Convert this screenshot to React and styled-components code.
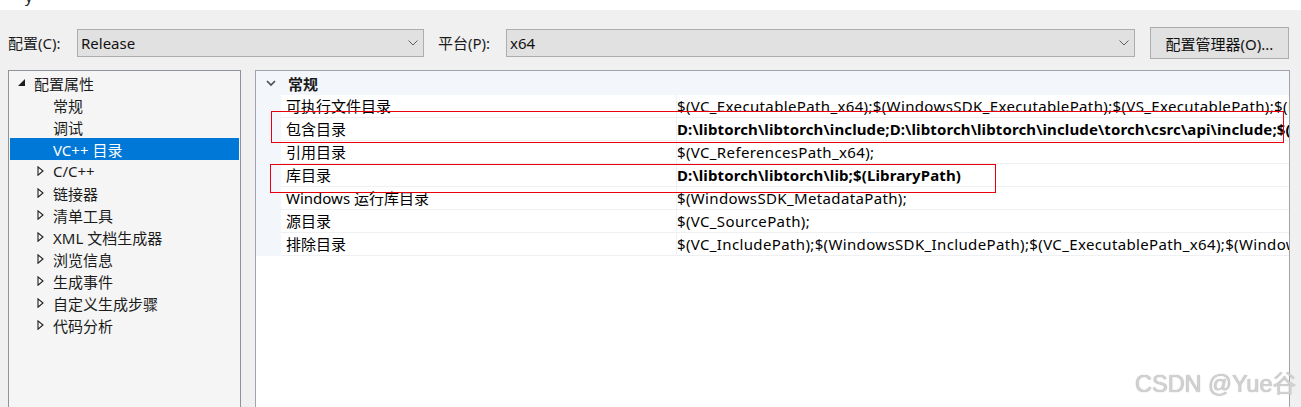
import React from 'react';
import styled, { createGlobalStyle } from 'styled-components';

const GlobalStyle = createGlobalStyle`
  html, body {
    margin: 0;
    padding: 0;
    background: #f0f0f0;
    overflow: hidden;
  }
  body {
    font-family: 'Noto Sans', 'Noto Sans CJK SC', sans-serif;
    font-size: 15px;
    color: #1b1b1b;
  }
`;

const Page = styled.div`
  position: relative;
  height: 407px;
  overflow: hidden;
`;

const TitleStrip = styled.div`
  height: 10px;
  background: #fff;
  overflow: hidden;
  padding-left: 25px;
`;

const TitleText = styled.span`
  display: block;
  line-height: 14px;
  font-size: 15px;
  margin-top: -11px;
  color: #222;
`;

const Toolbar = styled.div`
  height: 60px;
  box-sizing: border-box;
  display: flex;
  align-items: flex-start;
  padding: 17px 12px 0 8px;
`;

const Label = styled.label`
  width: ${({ $w }) => $w}px;
  margin-left: ${({ $ml }) => $ml || 0}px;
  margin-top: 2px;
  line-height: 28px;
  white-space: nowrap;
`;

const Combo = styled.div`
  width: ${({ $w }) => $w}px;
  height: 28px;
  margin-top: 2px;
  box-sizing: border-box;
  border: 1px solid #adadad;
  background: #e1e1e1;
  display: flex;
  align-items: center;
  justify-content: space-between;
  padding: 0 5px 0 3px;
  color: #111;
`;

const Button = styled.button`
  margin-left: 15px;
  width: 139px;
  height: 32px;
  border: 1px solid #adadad;
  background: #e1e1e1;
  font: inherit;
  color: #111;
  padding: 0;
`;

const Main = styled.div`
  display: flex;
  gap: 14px;
  padding: 0 11px 0 8px;
  height: 337px;
`;

const TreePanel = styled.div`
  width: 233px;
  flex: none;
  box-sizing: border-box;
  border: 1px solid #8e9299;
  border-bottom: none;
  background: #f5f5f5;
  padding: 1px;
`;

const TreeRow = styled.div`
  height: 22px;
  display: flex;
  align-items: center;
  padding-left: ${({ $level }) => ($level ? 27 : 8)}px;
  background: ${({ $selected }) => ($selected ? '#0078d7' : 'transparent')};
  color: ${({ $selected }) => ($selected ? '#fff' : '#1b1b1b')};
  white-space: nowrap;
`;

const Twisty = styled.span`
  width: 16px;
  flex: none;
  display: flex;
  align-items: center;
`;

const GridPanel = styled.div`
  flex: 1;
  box-sizing: border-box;
  border: 1px solid #a0a3a9;
  border-bottom: none;
  background: #fff;
  overflow: hidden;
`;

const CategoryRow = styled.div`
  height: 24px;
  display: flex;
  align-items: center;
  background: #f3f6fa;
  font-weight: 700;
`;

const Chevron = styled.span`
  width: 30px;
  flex: none;
  display: flex;
  justify-content: center;
  padding-right: 2px;
`;

const PropRow = styled.div`
  display: grid;
  grid-template-columns: 25px 395px 1fr;
  height: 23px;
`;

const Gutter = styled.div`
  background: #f3f6fa;
`;

const Cell = styled.div`
  box-sizing: border-box;
  border-bottom: 1px solid #eef0f3;
  border-left: ${({ $value }) => ($value ? '1px solid #eef0f3' : 'none')};
  padding-left: ${({ $value }) => ($value ? 0 : 5)}px;
  line-height: 22px;
  white-space: nowrap;
  overflow: hidden;
  font-weight: ${({ $bold }) => ($bold ? 700 : 400)};
  letter-spacing: ${({ $value, $bold }) => ($value ? ($bold ? '0.12px' : '0.36px') : '0')};
  color: #000;
`;

const RedBox = styled.div`
  position: absolute;
  left: ${({ $x }) => $x}px;
  top: ${({ $y }) => $y}px;
  width: ${({ $w }) => $w}px;
  height: ${({ $h }) => $h}px;
  box-sizing: border-box;
  border: 1px solid #e8000b;
  pointer-events: none;
`;

const Watermark = styled.div`
  position: absolute;
  left: 1135px;
  top: 369px;
  font-family: 'Liberation Sans', 'Noto Sans CJK SC', sans-serif;
  font-size: 23.5px;
  line-height: 30px;
  color: #d2d2d2;
  text-shadow: 0 0 1px #9a9a9a;
  white-space: nowrap;
`;

const DropArrow = () => (
  <svg width="10" height="6" viewBox="0 0 10 6">
    <path d="M0.5 0.5 L5 5 L9.5 0.5" fill="none" stroke="#606060" strokeWidth="1" />
  </svg>
);

const Expanded = () => (
  <svg width="8" height="8" viewBox="0 0 8 8">
    <path d="M7 0 L7 7 L0 7 Z" fill="#1e1e1e" />
  </svg>
);

const Collapsed = () => (
  <svg width="7" height="10" viewBox="0 0 7 10">
    <path d="M1 0.8 L6 5 L1 9.2 Z" fill="none" stroke="#1e1e1e" strokeWidth="1.1" />
  </svg>
);

const CatChevron = () => (
  <svg width="10" height="7" viewBox="0 0 10 7">
    <path d="M1 1 L5 5 L9 1" fill="none" stroke="#505050" strokeWidth="1.7" />
  </svg>
);

const treeItems = [
  { label: '配置属性', level: 0, state: 'open' },
  { label: '常规', level: 1 },
  { label: '调试', level: 1 },
  { label: 'VC++ 目录', level: 1, selected: true },
  { label: 'C/C++', level: 1, state: 'closed' },
  { label: '链接器', level: 1, state: 'closed' },
  { label: '清单工具', level: 1, state: 'closed' },
  { label: 'XML 文档生成器', level: 1, state: 'closed' },
  { label: '浏览信息', level: 1, state: 'closed' },
  { label: '生成事件', level: 1, state: 'closed' },
  { label: '自定义生成步骤', level: 1, state: 'closed' },
  { label: '代码分析', level: 1, state: 'closed' },
];

const props = [
  ['可执行文件目录', '$(VC_ExecutablePath_x64);$(WindowsSDK_ExecutablePath);$(VS_ExecutablePath);$(MSBuild_ExecutablePath);$(FxCopDir);$(PATH);'],
  ['包含目录', 'D:\\libtorch\\libtorch\\include;D:\\libtorch\\libtorch\\include\\torch\\csrc\\api\\include;$(IncludePath)', true],
  ['引用目录', '$(VC_ReferencesPath_x64);'],
  ['库目录', 'D:\\libtorch\\libtorch\\lib;$(LibraryPath)', true],
  ['Windows 运行库目录', '$(WindowsSDK_MetadataPath);'],
  ['源目录', '$(VC_SourcePath);'],
  ['排除目录', '$(VC_IncludePath);$(WindowsSDK_IncludePath);$(VC_ExecutablePath_x64);$(WindowsSDK_ExecutablePath);'],
];

export default function App() {
  return (
    <>
      <GlobalStyle />
      <Page>
        <TitleStrip>
          <TitleText>y</TitleText>
        </TitleStrip>
        <Toolbar>
          <Label $w={69}>配置(C):</Label>
          <Combo $w={347}>
            <span>Release</span>
            <DropArrow />
          </Combo>
          <Label $w={68} $ml={14}>平台(P):</Label>
          <Combo $w={629}>
            <span>x64</span>
            <DropArrow />
          </Combo>
          <Button>配置管理器(O)...</Button>
        </Toolbar>
        <Main>
          <TreePanel>
            {treeItems.map((item) => (
              <TreeRow key={item.label} $level={item.level} $selected={item.selected}>
                <Twisty>
                  {item.state === 'open' && <Expanded />}
                  {item.state === 'closed' && <Collapsed />}
                </Twisty>
                {item.label}
              </TreeRow>
            ))}
          </TreePanel>
          <GridPanel>
            <CategoryRow>
              <Chevron>
                <CatChevron />
              </Chevron>
              常规
            </CategoryRow>
            {props.map(([name, value, bold]) => (
              <PropRow key={name}>
                <Gutter />
                <Cell>{name}</Cell>
                <Cell $value $bold={bold}>{value}</Cell>
              </PropRow>
            ))}
          </GridPanel>
        </Main>
        <RedBox $x={271} $y={111} $w={1013} $h={32} />
        <RedBox $x={270} $y={164} $w={726} $h={29} />
        <Watermark>CSDN @Yue谷</Watermark>
      </Page>
    </>
  );
}
